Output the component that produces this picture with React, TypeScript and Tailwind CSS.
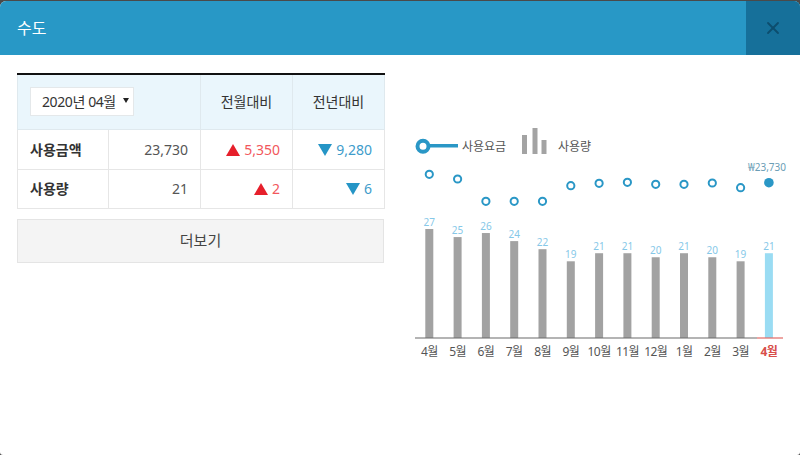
import React from "react";
import { X } from "lucide-react";

const font = { fontFamily: '"Noto Sans", "Noto Sans CJK KR", sans-serif' };

const months = ["4월", "5월", "6월", "7월", "8월", "9월", "10월", "11월", "12월", "1월", "2월", "3월", "4월"];
const usage = [27, 25, 26, 24, 22, 19, 21, 21, 20, 21, 20, 19, 21];
const dotY = [174.3, 179, 201.3, 201.3, 201.3, 185.7, 183.3, 182.3, 184.3, 184.3, 183, 187.7, 182.7];

// chart svg sits at page (405,120)
const OX = 405;
const OY = 120;
const BASE = 338;
const UNIT = 109 / 27;

function Tri({ up, color }: { up: boolean; color: string }) {
  return (
    <svg width="14" height="12" viewBox="0 0 14 12" className="inline-block mr-[4px] -mt-[2px]">
      <polygon points={up ? "7,0 14,12 0,12" : "0,0 14,0 7,12"} fill={color} />
    </svg>
  );
}

function Chart() {
  const cx = (i: number) => 429.3 + i * 28.3 - OX;
  const y = (v: number) => v - OY;
  return (
    <svg width="385" height="250" viewBox="0 0 385 250" style={font}>
      {/* legend */}
      <line x1={428 - OX} y1={y(145.8)} x2={458 - OX} y2={y(145.8)} stroke="#2a97c6" strokeWidth="3.5" />
      <circle cx={423 - OX} cy={y(146.2)} r="5.5" fill="white" stroke="#2a97c6" strokeWidth="4" />
      <text x={462 - OX} y={y(150.5)} fontSize="12" fill="#555">사용요금</text>
      <rect x={522 - OX} y={y(135)} width="5" height="19" fill="#a3a3a3" />
      <rect x={532.5 - OX} y={y(128)} width="5" height="26" fill="#a3a3a3" />
      <rect x={541.5 - OX} y={y(140)} width="5" height="14" fill="#a3a3a3" />
      <text x={558 - OX} y={y(150.5)} fontSize="12" fill="#555">사용량</text>

      {/* bars */}
      {usage.map((v, i) => {
        const top = BASE - v * UNIT;
        const last = i === usage.length - 1;
        return (
          <g key={i}>
            <rect x={cx(i) - 4} y={y(top)} width="8" height={v * UNIT} fill={last ? "#9adcf3" : "#a2a2a2"} />
            <text x={cx(i)} y={y(top - 3)} fontSize="10" textAnchor="middle" fill="#86c8e8">{v}</text>
          </g>
        );
      })}

      {/* baseline */}
      <line x1={415 - OX} y1={y(338)} x2={757 - OX} y2={y(338)} stroke="#6b6b6b" strokeWidth="1.2" />
      <line x1={757 - OX} y1={y(338)} x2={783 - OX} y2={y(338)} stroke="#e36a64" strokeWidth="1.2" />

      {/* month labels */}
      {months.map((m, i) => {
        const last = i === months.length - 1;
        return (
          <text
            key={i}
            x={cx(i)}
            y={y(355.5)}
            fontSize="12"
            textAnchor="middle"
            letterSpacing="-0.6"
            fill={last ? "#d84f4a" : "#555"}
            fontWeight={last ? 700 : 400}
          >
            {m}
          </text>
        );
      })}

      {/* price dots */}
      <text x={767 - OX} y={y(170.5)} fontSize="10" textAnchor="middle" fill="#6a9db5">₩23,730</text>
      {dotY.map((d, i) =>
        i === dotY.length - 1 ? (
          <circle key={i} cx={cx(i)} cy={y(d)} r="4.8" fill="#2a97c6" />
        ) : (
          <circle key={i} cx={cx(i)} cy={y(d)} r="3.6" fill="white" stroke="#2a97c6" strokeWidth="2" />
        )
      )}
    </svg>
  );
}

export default function App() {
  return (
    <div className="min-h-screen bg-[#4a4a4a] pt-px" style={font}>
      <div className="h-[454px] bg-white rounded-t-[6px] rounded-b-[3px] overflow-hidden flex flex-col">
        {/* header */}
        <div className="h-[54px] flex bg-[#2898c6]">
          <div className="flex-1 flex items-center pl-[17px] text-white text-[16px] leading-none">수도</div>
          <div className="w-[54px] flex items-center justify-center bg-[#16709a]">
            <X className="w-[20px] h-[20px] text-[#0d4d6e]" strokeWidth={2.2} />
          </div>
        </div>

        {/* body */}
        <div className="flex pl-[17px]">
          <div className="w-[367px] pt-[18px]">
            <table className="w-full table-fixed border-collapse text-[14px] text-[#333]">
              <colgroup>
                <col className="w-[91px]" />
                <col className="w-[92px]" />
                <col className="w-[92px]" />
                <col className="w-[92px]" />
              </colgroup>
              <thead>
                <tr className="h-[55px] bg-[#eaf6fc]">
                  <th colSpan={2} className="border border-[#dfe9ee] border-t-2 border-t-[#111] text-left font-normal pl-[12px]">
                    <div className="w-[104px] h-[29px] bg-white border border-[#e4e8ea] flex items-center pl-[11px] pr-[4px] text-[14px] text-[#333] whitespace-nowrap tracking-[-0.4px]">
                      <span className="flex-1">2020년 04월</span>
                      <svg width="6" height="5" viewBox="0 0 6 5" className="mb-[2px]">
                        <polygon points="0,0 6,0 3,5" fill="#222" />
                      </svg>
                    </div>
                  </th>
                  <th className="border border-[#dfe9ee] border-t-2 border-t-[#111] font-normal">전월대비</th>
                  <th className="border border-[#dfe9ee] border-t-2 border-t-[#111] font-normal">전년대비</th>
                </tr>
              </thead>
              <tbody>
                <tr className="h-[40px]">
                  <td className="border border-[#e6e6e6] pl-[12px] font-semibold">사용금액</td>
                  <td className="border border-[#e6e6e6] text-right pr-[12px] text-[#555]">23,730</td>
                  <td className="border border-[#e6e6e6] text-right pr-[12px] text-[#f2575c]">
                    <Tri up color="#e61f2b" />5,350
                  </td>
                  <td className="border border-[#e6e6e6] text-right pr-[12px] text-[#3d9ccb]">
                    <Tri up={false} color="#2595c6" />9,280
                  </td>
                </tr>
                <tr className="h-[39px]">
                  <td className="border border-[#e6e6e6] pl-[12px] font-semibold">사용량</td>
                  <td className="border border-[#e6e6e6] text-right pr-[12px] text-[#555]">21</td>
                  <td className="border border-[#e6e6e6] text-right pr-[12px] text-[#f2575c]">
                    <Tri up color="#e61f2b" />2
                  </td>
                  <td className="border border-[#e6e6e6] text-right pr-[12px] text-[#3d9ccb]">
                    <Tri up={false} color="#2595c6" />6
                  </td>
                </tr>
              </tbody>
            </table>
            <button className="mt-[10px] w-full h-[44px] bg-[#f4f4f4] border border-[#e4e4e4] text-[15px] text-[#444]">
              더보기
            </button>
          </div>
          <div className="ml-[21px] mt-[65px]">
            <Chart />
          </div>
        </div>
      </div>
    </div>
  );
}
